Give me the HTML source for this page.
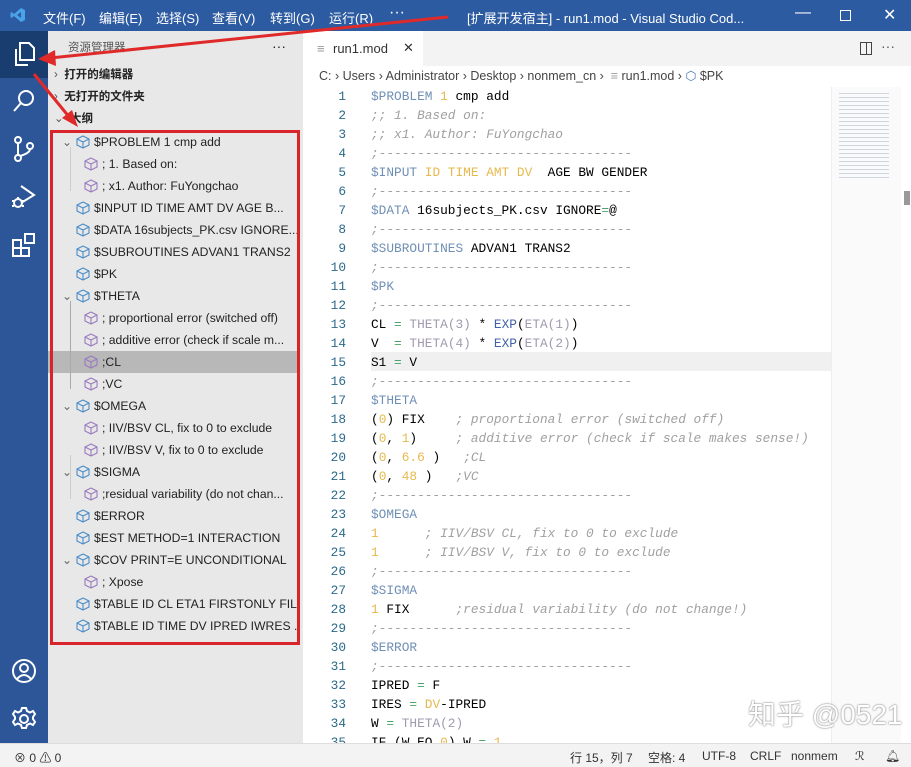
<!DOCTYPE html>
<html><head><meta charset="utf-8"><style>
*{margin:0;padding:0;box-sizing:border-box}
body{width:911px;height:767px;overflow:hidden;background:#fff;font-family:"Liberation Sans","Noto Sans CJK SC",sans-serif;position:relative}
.abs{position:absolute}
#title{left:0;top:0;width:911px;height:31px;background:#2c5ba1;color:#fff;font-size:13px}
#title span{position:absolute;top:8px}
#act{left:0;top:31px;width:48px;height:712px;background:#2c5697}
#side{left:48px;top:31px;width:255px;height:712px;background:#e8e8e8;font-size:12.2px;color:#222}
.row{position:absolute;left:0;width:252px;height:22px;line-height:22px;white-space:nowrap;overflow:hidden}
#ed{left:303px;top:31px;width:608px;height:712px;background:#fff}
#code{position:absolute;left:0;top:56px;font-family:"Liberation Mono",monospace;font-size:12.8px}
.ln{position:absolute;height:19px;line-height:19px;white-space:pre}
.num{position:absolute;left:0;width:43px;text-align:right;color:#2b6a8a}
.k{color:#6f8fb5}.n{color:#e6b94c}.c{color:#a0a0a0;font-style:italic}.t{color:#a09ab0}.e{color:#3f62a8}.o{color:#4aa36b}
#status{left:0;top:743px;width:911px;height:24px;background:#f3f3f3;border-top:1px solid #ddd;font-size:12px;color:#333}
#status span{position:absolute;top:5px}
</style></head><body>
<div id="title" class="abs">
<svg class="abs" style="left:10px;top:7px" width="16" height="16" viewBox="0 0 16 16"><path d="M11 1 L15 3 V13 L11 15 L4 9 L1.5 11 L0.5 10 V6 L1.5 5 L4 7 Z M11 5 L7 8 L11 11 Z" fill="#4aa3e8"/></svg>
<span style="left:43px">文件(F)</span><span style="left:99px">编辑(E)</span><span style="left:156px">选择(S)</span><span style="left:212px">查看(V)</span><span style="left:270px">转到(G)</span><span style="left:329px">运行(R)</span><span style="left:389px;top:4px;font-size:16px">···</span>
<span style="left:467px">[扩展开发宿主] - run1.mod - Visual Studio Cod...</span>
<span style="left:795px;top:4px;font-size:16px">—</span>
<div class="abs" style="left:840px;top:10px;width:11px;height:11px;border:1.3px solid #fff"></div>
<span style="left:883px;top:5px;font-size:16px">✕</span>
</div>
<div id="act" class="abs">
<div class="abs" style="left:0;top:0;width:48px;height:47px;background:#1a3d70"></div>
<svg class="abs" style="left:12px;top:10px" width="24" height="26" viewBox="0 0 24 26" fill="none" stroke="#fff" stroke-width="2"><path d="M8 2 H17 L22 7 V19 H8 Z M4 8 V24 H16"/></svg>
<svg class="abs" style="left:12px;top:58px" width="24" height="24" viewBox="0 0 24 24" fill="none" stroke="#fff" stroke-width="2"><circle cx="14" cy="9" r="7"/><path d="M9 14 L2 22"/></svg>
<svg class="abs" style="left:12px;top:104px" width="24" height="28" viewBox="0 0 24 28" fill="none" stroke="#fff" stroke-width="2"><circle cx="6" cy="5" r="3"/><circle cx="6" cy="23" r="3"/><circle cx="18" cy="11" r="3"/><path d="M6 8 V20 M18 14 Q18 18 8 21"/></svg>
<svg class="abs" style="left:10px;top:152px" width="28" height="28" viewBox="0 0 28 28" fill="none" stroke="#fff" stroke-width="2"><path d="M11 3 L24 12 L11 20"/><circle cx="8" cy="20" r="4"/><path d="M2 18h2M2 23h2M12 18h2M12 23h2M8 14v2"/></svg>
<svg class="abs" style="left:11px;top:201px" width="26" height="26" viewBox="0 0 26 26" fill="none" stroke="#fff" stroke-width="2"><path d="M2 8 H10 V24 H2 Z M2 16 H18 V24 H10 M14 2 H23 V11 H14 Z"/></svg>
<svg class="abs" style="left:11px;top:627px" width="26" height="26" viewBox="0 0 26 26" fill="none" stroke="#fff" stroke-width="2"><circle cx="13" cy="13" r="11"/><circle cx="13" cy="10" r="4"/><path d="M6 21 Q13 13 20 21"/></svg>
<svg class="abs" style="left:11px;top:675px" width="26" height="26" viewBox="0 0 26 26" fill="none" stroke="#fff" stroke-width="2"><circle cx="13" cy="13" r="4"/><path d="M11 2h4l1 3 3 1.5 3-1.5 2 3-2 3v2l2 3-2 3-3-1.5-3 1.5-1 3h-4l-1-3-3-1.5-3 1.5-2-3 2-3v-2l-2-3 2-3 3 1.5 3-1.5z"/></svg>
</div>
<div id="side" class="abs">
<div class="row" style="top:6px;left:20px;color:#555;font-size:11.5px">资源管理器</div>
<div class="row" style="top:4px;left:224px;width:30px;font-size:14px">···</div>
<div class="row" style="top:33px;left:6px;font-weight:bold;font-size:11.5px"><span style="color:#555;font-weight:normal">›</span>&nbsp; 打开的编辑器</div>
<div class="row" style="top:55px;left:6px;font-weight:bold;font-size:11.5px"><span style="color:#555;font-weight:normal">›</span>&nbsp; 无打开的文件夹</div>
<div class="row" style="top:77px;left:6px;font-weight:bold;font-size:11.5px"><span style="color:#555;font-weight:normal">⌄</span>&nbsp; 大纲</div>
<div id="items"></div>
</div>
<div id="ed" class="abs">
<div class="abs" style="left:0;top:0;width:608px;height:35px;background:#f3f3f3"></div>
<div class="abs" style="left:0;top:0;width:120px;height:35px;background:#fff;font-size:13px;color:#333"><span class="abs" style="left:14px;top:10px;color:#999">≡</span><span class="abs" style="left:30px;top:10px">run1.mod</span><span class="abs" style="left:100px;top:9px">✕</span></div>
<div class="abs" style="left:557px;top:11px;width:12px;height:13px;border:1.3px solid #444"></div><div class="abs" style="left:563px;top:11px;width:1px;height:13px;background:#444"></div>
<span class="abs" style="left:578px;top:7px;font-size:14px;color:#555">···</span>
<div class="abs" style="left:16px;top:37px;font-size:12.5px;color:#444;white-space:pre">C: › Users › Administrator › Desktop › nonmem_cn ›  <span style="color:#999">≡</span> run1.mod › <span style="color:#4a78b0">⬡</span> $PK</div>
<div class="abs" style="left:68px;top:321px;width:460px;height:19px;background:#f0f0f0"></div>
<div id="code"></div>
<div class="abs" style="left:528px;top:56px;width:70px;height:656px;background:#fafafa;border-left:1px solid #eee"></div>
<div class="abs" style="left:536px;top:60px;width:50px;height:90px;background:repeating-linear-gradient(#fafafa 0 2px,#cfd6e0 2px 3px,#fafafa 3px 4px)"></div>
<div class="abs" style="left:601px;top:160px;width:6px;height:14px;background:#999"></div>
</div>
<div class="abs" style="left:748px;top:693px;font-size:28px;color:#fff;text-shadow:0 0 1px #777,0 0 2px #999;white-space:nowrap">知乎 @0521</div>
<div id="status" class="abs"><span style="left:14px">⊗ 0 ⚠ 0</span><span style="left:570px">行 15，列 7</span><span style="left:648px">空格: 4</span><span style="left:702px">UTF-8</span><span style="left:750px">CRLF</span><span style="left:791px">nonmem</span><span style="left:855px">ℛ</span><span style="left:885px">🔔︎</span></div>
<div class="abs" style="left:50px;top:130px;width:250px;height:515px;border:3px solid #d8242b"></div>
<svg class="abs" style="left:0;top:0" width="911" height="767"><g stroke="#e02a2a" stroke-width="3" fill="#e02a2a"><line x1="448" y1="17" x2="50" y2="58"/><polygon points="38,59 55,50 56,66" stroke="none"/><line x1="34" y1="74" x2="70" y2="118"/><polygon points="78,127 62,118 72,110" stroke="none"/></g></svg>
<script>
var items=[[0,1,"$PROBLEM 1 cmp add"],[1,0,"; 1. Based on:"],[1,0,"; x1. Author: FuYongchao"],[0,0,"$INPUT ID TIME AMT DV  AGE B..."],[0,0,"$DATA 16subjects_PK.csv IGNORE..."],[0,0,"$SUBROUTINES ADVAN1 TRANS2"],[0,0,"$PK"],[0,1,"$THETA"],[1,0,"; proportional error (switched off)"],[1,0,"; additive error (check if scale m..."],[1,0,";CL",1],[1,0,";VC"],[0,1,"$OMEGA"],[1,0,"; IIV/BSV CL, fix to 0 to exclude"],[1,0,"; IIV/BSV V, fix to 0 to exclude"],[0,1,"$SIGMA"],[1,0,";residual variability (do not chan..."],[0,0,"$ERROR"],[0,0,"$EST METHOD=1 INTERACTION"],[0,1,"$COV PRINT=E UNCONDITIONAL"],[1,0,"; Xpose"],[0,0,"$TABLE ID CL ETA1 FIRSTONLY FIL..."],[0,0,"$TABLE ID TIME DV IPRED IWRES ..."]];
var h="";items.forEach(function(it,i){var top=100+i*22;var x=it[0]?38:30;var col=it[0]?"#9b7bbd":"#4a8cc8";
h+='<div class="row" style="top:'+top+'px;'+(it[3]?'background:#b8b8b8;':'')+'">'+(it[1]?'<span class="abs" style="left:14px;color:#666">⌄</span>':'')+
'<svg class="abs" style="left:'+(x-2)+'px;top:4px" width="14" height="14" viewBox="0 0 14 14" fill="none" stroke="'+col+'" stroke-width="1.1"><path d="M7 1 L13 4 V10 L7 13 L1 10 V4 Z M1 4 L7 7 L13 4 M7 7 V13"/></svg><span class="abs" style="left:'+(x+16)+'px">'+it[2]+'</span></div>';});
h+='<div class="abs" style="left:22px;top:270px;width:1px;height:88px;background:#aaa"></div><div class="abs" style="left:22px;top:116px;width:1px;height:44px;background:#ccc"></div><div class="abs" style="left:22px;top:424px;width:1px;height:44px;background:#ccc"></div>';
document.getElementById("items").innerHTML=h;
var D='<span class="c">;---------------------------------</span>';
var L=['<span class="k">$PROBLEM</span> <span class="n">1</span> cmp add','<span class="c">;; 1. Based on:</span>','<span class="c">;; x1. Author: FuYongchao</span>',D,
'<span class="k">$INPUT</span> <span class="n">ID TIME AMT DV</span>  AGE BW GENDER',D,'<span class="k">$DATA</span> 16subjects_PK.csv IGNORE<span class="o">=</span>@',D,
'<span class="k">$SUBROUTINES</span> ADVAN1 TRANS2',D,'<span class="k">$PK</span>',D,
'CL <span class="o">=</span> <span class="t">THETA(3)</span> * <span class="e">EXP</span>(<span class="t">ETA(1)</span>)',
'V  <span class="o">=</span> <span class="t">THETA(4)</span> * <span class="e">EXP</span>(<span class="t">ETA(2)</span>)','S1 <span class="o">=</span> V',D,'<span class="k">$THETA</span>',
'(<span class="n">0</span>) FIX    <span class="c">; proportional error (switched off)</span>','(<span class="n">0</span>, <span class="n">1</span>)     <span class="c">; additive error (check if scale makes sense!)</span>',
'(<span class="n">0</span>, <span class="n">6.6</span> )   <span class="c">;CL</span>','(<span class="n">0</span>, <span class="n">48</span> )   <span class="c">;VC</span>',D,'<span class="k">$OMEGA</span>',
'<span class="n">1</span>      <span class="c">; IIV/BSV CL, fix to 0 to exclude</span>','<span class="n">1</span>      <span class="c">; IIV/BSV V, fix to 0 to exclude</span>',D,'<span class="k">$SIGMA</span>',
'<span class="n">1</span> FIX      <span class="c">;residual variability (do not change!)</span>',D,'<span class="k">$ERROR</span>',D,
'IPRED <span class="o">=</span> F','IRES <span class="o">=</span> <span class="n">DV</span>-IPRED','W <span class="o">=</span> <span class="t">THETA(2)</span>','IF (W.EQ.<span class="n">0</span>) W <span class="o">=</span> <span class="n">1</span>'];
var c="";L.forEach(function(s,i){c+='<div class="ln" style="top:'+(i*19)+'px;left:0;width:528px"><span class="num">'+(i+1)+'</span><span style="position:absolute;left:68px">'+s+'</span></div>';});
document.getElementById("code").innerHTML=c;
</script>
</body></html>
